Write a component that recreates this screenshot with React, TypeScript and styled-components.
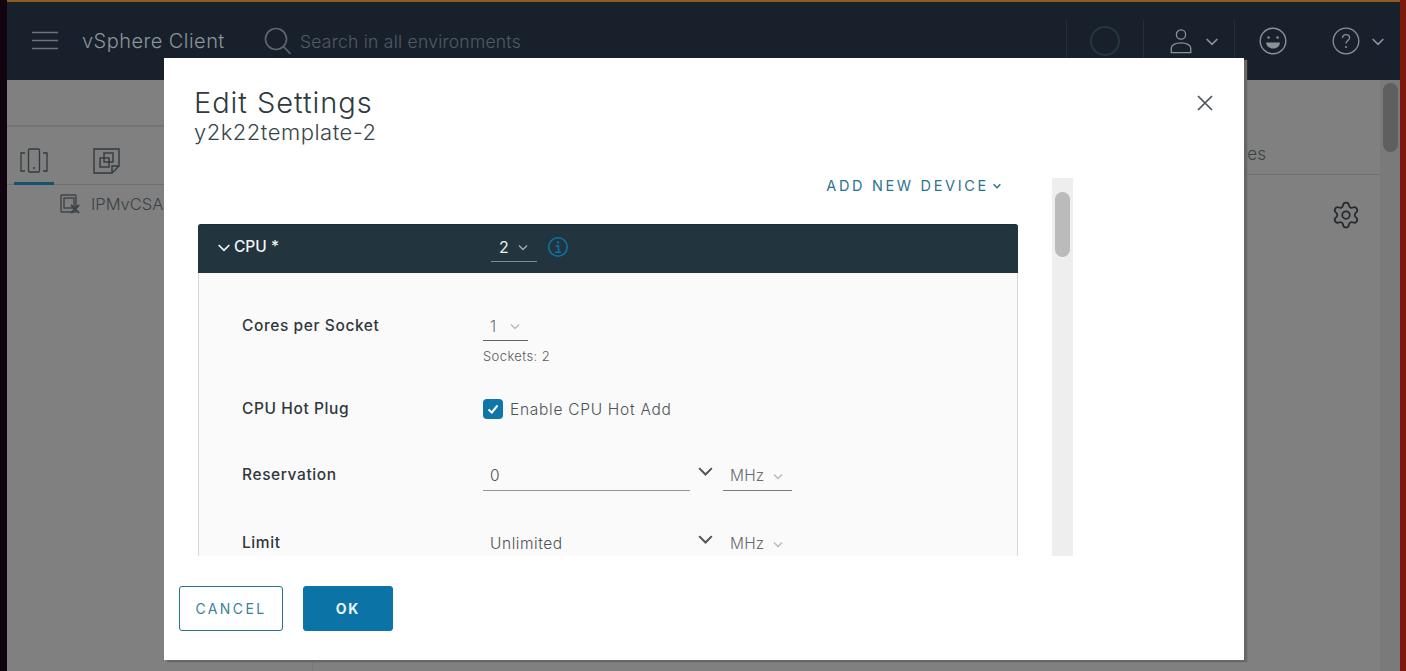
import { createGlobalStyle } from "styled-components"
import styled from "styled-components"
import { Settings } from "lucide-react"

const FONT = `Inter, "Noto Sans", "Liberation Sans", sans-serif`

const Global = createGlobalStyle`
  html, body { margin: 0; padding: 0; height: 100%; overflow: hidden; background: #808080; }
  #root { height: 100%; }
  * { box-sizing: border-box; }
`

const Frame = styled.div`
  position: relative;
  display: flex;
  width: 1406px;
  height: 671px;
  overflow: hidden;
  font-family: ${FONT};
`

const EdgeLeft = styled.div`
  width: 7px;
  background: #12040f;
`

const EdgeRight = styled.div`
  width: 6px;
  background: #7c180c;
`

const Page = styled.div`
  flex: 1;
  display: flex;
  flex-direction: column;
  min-width: 0;
  background: #808080;
`

const Header = styled.header`
  height: 80px;
  flex: none;
  display: flex;
  align-items: center;
  border-top: 2px solid #8a5c22;
  background: #18212b;
  color: #8a9298;
`

const Burger = styled.svg`
  width: 26px;
  height: 20px;
  margin: 0 24px 0 25px;
  color: #6b747b;
`

const Brand = styled.div`
  width: 182px;
  font-size: 20px;
  font-weight: 300;
  letter-spacing: 0.45px;
  color: #8c949a;
`

const SearchIcon = styled.svg`
  width: 28px;
  height: 28px;
  margin-right: 8px;
  color: #5e676e;
`

const SearchText = styled.div`
  flex: 1;
  font-size: 17.5px;
  font-weight: 300;
  letter-spacing: 0.25px;
  color: #515b64;
`

const HeaderCell = styled.div<{ $w: number; $line?: boolean; $pad?: number }>`
  width: ${(p) => p.$w}px;
  height: 42px;
  display: flex;
  align-items: center;
  justify-content: center;
  gap: 10px;
  padding-left: ${(p) => p.$pad ?? 0}px;
  border-left: ${(p) => (p.$line ? "1px solid #252f38" : "none")};
`

const HeadIcon = styled.svg<{ $s: number }>`
  width: ${(p) => p.$s}px;
  height: ${(p) => p.$s}px;
  color: #8a9298;
`

const Content = styled.div`
  flex: 1;
  display: flex;
  min-height: 0;
`

const Side = styled.aside`
  width: 306px;
  flex: none;
  border-right: 1px solid #787878;
`

const SideTop = styled.div`
  height: 47px;
  border-bottom: 2px solid #737373;
`

const SideTabs = styled.div`
  display: flex;
  height: 58px;
  padding: 0 0 0 7px;
  gap: 32px;
  border-bottom: 1px solid #6f6f6f;
`

const SideTab = styled.div<{ $on?: boolean }>`
  width: 40px;
  padding-top: 20px;
  display: flex;
  justify-content: center;
  border-bottom: 3px solid ${(p) => (p.$on ? "#15526b" : "transparent")};
  margin-bottom: -1px;
  color: #333a3f;
`

const TabIcon = styled.svg`
  width: 30px;
  height: 28px;
`

const TreeRow = styled.div`
  display: flex;
  align-items: center;
  gap: 10px;
  margin: 8px 0 0 52px;
  font-size: 16.5px;
  font-weight: 300;
  color: #3a4146;
`

const TreeIcon = styled.svg`
  width: 22px;
  height: 22px;
  color: #3d4448;
`

const Main = styled.main`
  flex: 1;
  min-width: 0;
  display: flex;
  flex-direction: column;
`

const MainTabs = styled.div`
  height: 95px;
  flex: none;
  display: flex;
  align-items: flex-end;
  justify-content: flex-end;
  padding: 0 114px 10px 0;
  border-bottom: 1px solid #707070;
  font-size: 17px;
  font-weight: 300;
  color: #3a4146;
`

const GearRow = styled.div`
  display: flex;
  justify-content: flex-end;
  padding: 25px 19px 0 0;
  color: #23292d;
`

const PageScroll = styled.div`
  width: 20px;
  flex: none;
  padding: 3px 2px 0 3px;
  background: #7a7a7a;
`

const PageThumb = styled.div`
  height: 69px;
  border-radius: 8px;
  background: #5f5f5f;
`

const Modal = styled.section`
  position: absolute;
  left: 164px;
  top: 58px;
  width: 1080px;
  height: 602px;
  display: flex;
  flex-direction: column;
  background: #fff;
  box-shadow: 3px 2px 1px #676767;
`

const ModalHead = styled.div`
  height: 120px;
  flex: none;
  display: flex;
  justify-content: space-between;
  padding: 28px 27px 0 30px;
`

const Title = styled.h1`
  margin: 0;
  font-size: 29px;
  line-height: 34px;
  font-weight: 300;
  letter-spacing: 0.95px;
  color: #2f3a40;
`

const Sub = styled.div`
  font-size: 22px;
  line-height: 24px;
  font-weight: 300;
  letter-spacing: 0.5px;
  color: #39444a;
`

const Close = styled.svg`
  width: 24px;
  height: 24px;
  margin: 5px 0 0;
  color: #4a5358;
`

const ModalBody = styled.div`
  height: 378px;
  flex: none;
  display: flex;
  padding-left: 34px;
  overflow: hidden;
`

const Column = styled.div`
  width: 820px;
  flex: none;
`

const AddRow = styled.div`
  height: 46px;
  display: flex;
  align-items: flex-start;
  justify-content: flex-end;
  gap: 3px;
  padding: 0 16px 0 0;
  font-size: 14.5px;
  line-height: 16px;
  letter-spacing: 2.67px;
  color: #2a7390;
`

const AddChevron = styled.svg`
  width: 10px;
  height: 10px;
  margin-top: 3px;
  color: #2a6e88;
`

const Panel = styled.div`
  border: 1px solid #d4d6d7;
  border-top: none;
  border-radius: 3px 3px 0 0;
  background: #fafafa;
`

const PanelHead = styled.div`
  height: 49px;
  margin: 0 -1px;
  display: flex;
  align-items: center;
  border-radius: 3px 3px 0 0;
  border-top: 1px solid #1a2c35;
  background: #22343e;
  color: #fff;
`

const CpuLabel = styled.div`
  width: 274px;
  display: flex;
  align-items: center;
  gap: 2px;
  padding: 0 0 5px 18px;
  font-size: 15.5px;
  font-weight: 500;
  color: #f2f4f5;
`

const SmallChevron = styled.svg<{ $c?: string; $s?: number }>`
  width: ${(p) => p.$s ?? 12}px;
  height: ${(p) => p.$s ?? 12}px;
  flex: none;
  color: ${(p) => p.$c ?? "#a8adb0"};
`

const CpuSelect = styled.div`
  width: 46px;
  height: 29px;
  margin: 0 10px 4px 19px;
  display: flex;
  align-items: center;
  justify-content: space-between;
  padding: 0 8px;
  border-bottom: 1px solid #7f8b91;
  font-size: 16px;
  color: #eef0f1;
`

const InfoIcon = styled.svg`
  width: 22px;
  height: 22px;
  margin-bottom: 4px;
  color: #0c74a5;
`

const Form = styled.div`
  padding: 39px 0 0 43px;
`

const Row = styled.div<{ $h: number }>`
  display: grid;
  grid-template-columns: 241px 1fr;
  height: ${(p) => p.$h}px;
`

const Label = styled.div`
  padding-top: 4px;
  font-size: 15.5px;
  line-height: 20px;
  font-weight: 500;
  letter-spacing: 0.6px;
  color: #2f383d;
`

const Select = styled.div<{ $w: number }>`
  width: ${(p) => p.$w}px;
  height: 29px;
  display: flex;
  align-items: center;
  justify-content: space-between;
  padding: 0 7px;
  border-bottom: 1px solid ${(p) => (p.$w === 45 ? "#5f666a" : "#8b9195")};
  font-size: 15.5px;
  font-weight: 300;
  color: #666c70;
`

const Hint = styled.div`
  margin-top: 7px;
  font-size: 13px;
  font-weight: 300;
  letter-spacing: 0.4px;
  color: #565c60;
`

const CheckRow = styled.div`
  align-self: start;
  margin-top: 4px;
  display: flex;
  align-items: center;
  gap: 7px;
  font-size: 15.5px;
  font-weight: 300;
  letter-spacing: 0.72px;
  color: #4c5357;
`

const CheckBox = styled.div`
  width: 20px;
  height: 20px;
  display: flex;
  align-items: center;
  justify-content: center;
  border-radius: 4px;
  background: #0e77a9;
  color: #fff;
`

const ValueRow = styled.div`
  display: flex;
  align-items: flex-start;
`

const ValueInput = styled.div<{ $line: boolean }>`
  width: 207px;
  height: 30px;
  display: flex;
  align-items: center;
  padding: 0 7px;
  border-bottom: 1px solid ${(p) => (p.$line ? "#8f9497" : "transparent")};
  font-size: 15.5px;
  font-weight: 300;
  letter-spacing: 0.55px;
  color: #4c5357;
`

const ValueChevron = styled.div`
  width: 33px;
  display: flex;
  justify-content: center;
  padding: 0 3px 0 0;
  color: #4f565a;
`

const Unit = styled(Select)<{ $line: boolean }>`
  border-bottom-color: ${(p) => (p.$line ? "#777d80" : "transparent")};
  height: 30px;
  padding-right: 8px;
  letter-spacing: 0.2px;
`

const Track = styled.div`
  width: 21px;
  flex: none;
  margin-left: 34px;
  padding: 14px 3px 0;
  background: #eeeeee;
`

const Thumb = styled.div`
  height: 65px;
  border-radius: 8px;
  background: #bbbbbb;
`

const Footer = styled.div`
  flex: 1;
  display: flex;
  align-items: flex-start;
  gap: 20px;
  padding: 30px 0 0 15px;
`

const Button = styled.button<{ $primary?: boolean }>`
  height: 45px;
  width: ${(p) => (p.$primary ? 90 : 104)}px;
  padding: 0;
  border: 1px solid ${(p) => (p.$primary ? "#0b73a6" : "#25738f")};
  border-radius: 3px;
  background: ${(p) => (p.$primary ? "#0b73a6" : "#fff")};
  color: ${(p) => (p.$primary ? "#e9f4f8" : "#3d7f98")};
  font-family: ${FONT};
  font-size: 14px;
  font-weight: ${(p) => (p.$primary ? 700 : 400)};
  letter-spacing: ${(p) => (p.$primary ? 1.7 : 2.4)}px;
`

const Chevron = () => (
  <path d="M2 4.5 L6 8.5 L10 4.5" fill="none" stroke="currentColor" strokeWidth="1.3" />
)

const App = () => {
  return (
    <>
      <Global />
      <Frame>
        <EdgeLeft />
        <Page>
          <Header>
            <Burger viewBox="0 0 26 20">
              <path d="M0 1.5H26M0 9.5H26M0 17.5H26" stroke="currentColor" strokeWidth="1.4" />
            </Burger>
            <Brand>vSphere Client</Brand>
            <SearchIcon viewBox="0 0 28 28" fill="none" stroke="currentColor" strokeWidth="1.7">
              <circle cx="12" cy="12" r="10.5" />
              <path d="M19.5 19.5L26.5 27" />
            </SearchIcon>
            <SearchText>Search in all environments</SearchText>
            <HeaderCell $w={77} $line>
              <HeadIcon $s={32} viewBox="0 0 32 32" fill="none">
                <circle cx="16" cy="16" r="14" stroke="#27373e" strokeWidth="2" />
              </HeadIcon>
            </HeaderCell>
            <HeaderCell $w={91} $line $pad={10}>
              <HeadIcon $s={26} viewBox="0 0 24 28" fill="none" stroke="currentColor" strokeWidth="1.4">
                <circle cx="12" cy="7" r="5" />
                <path d="M1.5 26.5V21.5C1.5 18.5 6 16 12 16S22.5 18.5 22.5 21.5V26.5Z" />
              </HeadIcon>
              <SmallChevron $s={16} $c="#8a9298" viewBox="0 0 12 12">
                <Chevron />
              </SmallChevron>
            </HeaderCell>
            <HeaderCell $w={76} $line>
              <HeadIcon $s={28} viewBox="0 0 28 28" fill="none" stroke="currentColor" strokeWidth="1.4">
                <circle cx="14" cy="14" r="12.8" />
                <circle cx="9.5" cy="10.5" r="1.2" fill="currentColor" stroke="none" />
                <circle cx="18.5" cy="10.5" r="1.2" fill="currentColor" stroke="none" />
                <path d="M7 15.5H21C20.5 19.5 17.5 21.5 14 21.5S7.5 19.5 7 15.5Z" fill="currentColor" stroke="none" />
              </HeadIcon>
            </HeaderCell>
            <HeaderCell $w={90} $pad={7}>
              <HeadIcon $s={28} viewBox="0 0 28 28" fill="none" stroke="currentColor" strokeWidth="1.3">
                <circle cx="14" cy="14" r="12.8" />
                <path d="M10.5 11C10.5 8.8 12 7.6 14 7.6S17.6 9 17.6 10.8C17.6 13.4 14 13.6 14 16.6" />
                <circle cx="14" cy="20" r="1" fill="currentColor" stroke="none" />
              </HeadIcon>
              <SmallChevron $s={16} $c="#8a9298" viewBox="0 0 12 12">
                <Chevron />
              </SmallChevron>
            </HeaderCell>
          </Header>
          <Content>
            <Side>
              <SideTop />
              <SideTabs>
                <SideTab $on>
                  <TabIcon viewBox="0 0 30 28" fill="none" stroke="currentColor" strokeWidth="1.3">
                    <rect x="9.5" y="2" width="11" height="23" rx="1" />
                    <path d="M6 6H2V24H6M24 6H28V24H24" />
                    <circle cx="15" cy="21" r="1" fill="currentColor" stroke="none" />
                  </TabIcon>
                </SideTab>
                <SideTab>
                  <TabIcon viewBox="0 0 30 28" fill="none" stroke="currentColor" strokeWidth="1.4">
                    <path d="M3 2H28V19L21 26H3Z" />
                    <path d="M21 26V19H28" />
                    <rect x="9" y="11" width="9" height="9" />
                    <rect x="13" y="6" width="9" height="9" />
                  </TabIcon>
                </SideTab>
              </SideTabs>
              <TreeRow>
                <TreeIcon viewBox="0 0 22 22" fill="none" stroke="currentColor" strokeWidth="1.4">
                  <rect x="2" y="2" width="15" height="17" rx="1" />
                  <rect x="5" y="5" width="10" height="10" />
                  <path d="M12 12L20 20M20 12L12 20" strokeWidth="2" />
                </TreeIcon>
                IPMvCSA
              </TreeRow>
            </Side>
            <Main>
              <MainTabs>Updates</MainTabs>
              <GearRow>
                <Settings size={30} strokeWidth={1.4} />
              </GearRow>
            </Main>
            <PageScroll>
              <PageThumb />
            </PageScroll>
          </Content>
        </Page>
        <EdgeRight />

        <Modal>
          <ModalHead>
            <div>
              <Title>Edit Settings</Title>
              <Sub>y2k22template-2</Sub>
            </div>
            <Close viewBox="0 0 24 24" fill="none" stroke="currentColor" strokeWidth="1.7">
              <path d="M5 5L19 19M19 5L5 19" />
            </Close>
          </ModalHead>
          <ModalBody>
            <Column>
              <AddRow>
                ADD NEW DEVICE
                <AddChevron viewBox="0 0 12 12">
                  <path d="M2 4L6 8L10 4" fill="none" stroke="currentColor" strokeWidth="1.8" />
                </AddChevron>
              </AddRow>
              <Panel>
                <PanelHead>
                  <CpuLabel>
                    <SmallChevron $s={16} $c="#f2f4f5" viewBox="0 0 12 12">
                      <Chevron />
                    </SmallChevron>
                    CPU *
                  </CpuLabel>
                  <CpuSelect>
                    2
                    <SmallChevron viewBox="0 0 12 12">
                      <Chevron />
                    </SmallChevron>
                  </CpuSelect>
                  <InfoIcon viewBox="0 0 22 22" fill="none" stroke="currentColor" strokeWidth="1.6">
                    <circle cx="11" cy="11" r="9.2" />
                    <path d="M8.5 10H11.5V16M8 16.2H14" />
                    <circle cx="11" cy="6.5" r="1.2" fill="currentColor" stroke="none" />
                  </InfoIcon>
                </PanelHead>
                <Form>
                  <Row $h={83}>
                    <Label>Cores per Socket</Label>
                    <div>
                      <Select $w={45}>
                        1
                        <SmallChevron $c="#b4b8ba" viewBox="0 0 12 12">
                          <Chevron />
                        </SmallChevron>
                      </Select>
                      <Hint>Sockets: 2</Hint>
                    </div>
                  </Row>
                  <Row $h={66}>
                    <Label>CPU Hot Plug</Label>
                    <CheckRow>
                      <CheckBox>
                        <svg width="14" height="14" viewBox="0 0 14 14" fill="none" stroke="currentColor" strokeWidth="2">
                          <path d="M2.5 7.5L5.8 10.5L11.5 3.5" />
                        </svg>
                      </CheckBox>
                      Enable CPU Hot Add
                    </CheckRow>
                  </Row>
                  <Row $h={68}>
                    <Label>Reservation</Label>
                    <ValueRow>
                      <ValueInput $line>0</ValueInput>
                      <ValueChevron>
                        <SmallChevron $s={19} $c="#4f565a" viewBox="0 0 12 12">
                          <Chevron />
                        </SmallChevron>
                      </ValueChevron>
                      <Unit $w={69} $line>
                        MHz
                        <SmallChevron $c="#b4b8ba" viewBox="0 0 12 12">
                          <Chevron />
                        </SmallChevron>
                      </Unit>
                    </ValueRow>
                  </Row>
                  <Row $h={40}>
                    <Label>Limit</Label>
                    <ValueRow>
                      <ValueInput $line={false}>Unlimited</ValueInput>
                      <ValueChevron>
                        <SmallChevron $s={19} $c="#4f565a" viewBox="0 0 12 12">
                          <Chevron />
                        </SmallChevron>
                      </ValueChevron>
                      <Unit $w={69} $line={false}>
                        MHz
                        <SmallChevron $c="#b4b8ba" viewBox="0 0 12 12">
                          <Chevron />
                        </SmallChevron>
                      </Unit>
                    </ValueRow>
                  </Row>
                </Form>
              </Panel>
            </Column>
            <Track>
              <Thumb />
            </Track>
          </ModalBody>
          <Footer>
            <Button>CANCEL</Button>
            <Button $primary>OK</Button>
          </Footer>
        </Modal>
      </Frame>
    </>
  )
}

export default App
